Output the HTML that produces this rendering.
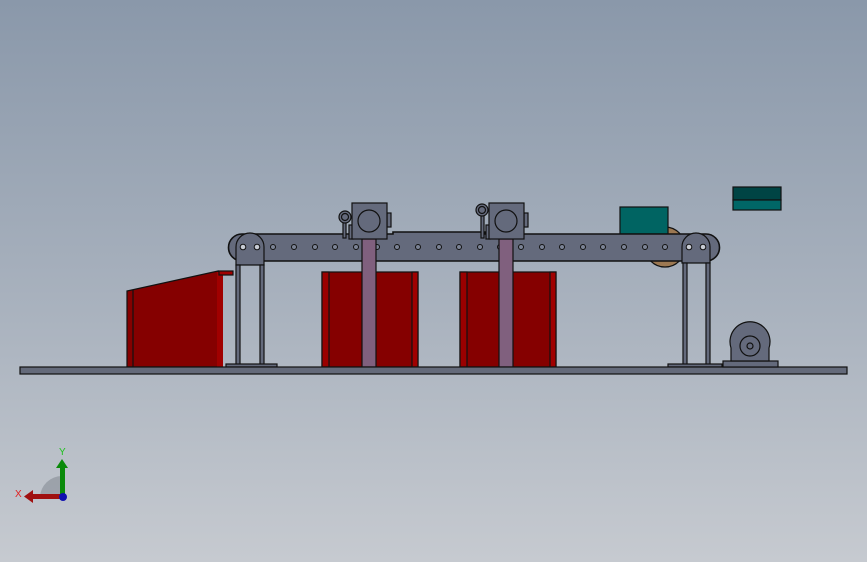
<!DOCTYPE html>
<html><head><style>html,body{margin:0;padding:0}body{width:867px;height:562px;overflow:hidden;background:linear-gradient(#8a98aa,#a9b2be 55%,#c6cad0)}</style></head><body>
<svg width="867" height="562" viewBox="0 0 867 562" xmlns="http://www.w3.org/2000/svg" style="position:absolute;left:0;top:0">
<g stroke="#111" stroke-width="1.2">
<rect x="733" y="187" width="48" height="13" fill="#004444"/>
<rect x="733" y="200" width="48" height="10" fill="#006666"/>
<circle cx="665" cy="247" r="20" fill="#9c7852"/>
<rect x="620" y="207" width="48" height="27" fill="#006462"/>
<polygon points="127,291 218,271 218,367 127,367" fill="#850000"/>
<line x1="133" y1="290" x2="133" y2="367"/>
<rect x="217" y="272" width="6" height="95" fill="#a00000" stroke="none"/>
<rect x="219" y="271" width="14" height="4" fill="#a00000"/>
<rect x="322" y="272" width="96" height="95" fill="#850000"/>
<rect x="322" y="272" width="7" height="95" fill="#9a0000"/>
<rect x="412" y="272" width="6" height="95" fill="#a00000"/>
<rect x="460" y="272" width="96" height="95" fill="#850000"/>
<rect x="460" y="272" width="7" height="95" fill="#9a0000"/>
<rect x="550" y="272" width="6" height="95" fill="#a00000"/>
<path d="M242 234 H393 V232 H485 V234 H706 A13.5 13.5 0 0 1 706 261 H242 A13.5 13.5 0 0 1 242 234 Z" fill="#646a7c" stroke-width="1.6"/>
<path d="M236 265 V247 A14 14 0 0 1 264 247 V265 Z" fill="#646a7c"/>
<path d="M682 263 V247 A14 14 0 0 1 710 247 V263 Z" fill="#646a7c"/>
<rect x="236" y="265" width="4" height="100" fill="#646a7c"/>
<rect x="260" y="265" width="4" height="100" fill="#646a7c"/>
<rect x="226" y="364" width="51" height="3" fill="#646a7c"/>
<rect x="683" y="263" width="4" height="102" fill="#646a7c"/>
<rect x="706" y="263" width="4" height="102" fill="#646a7c"/>
<rect x="668" y="364" width="54" height="3" fill="#646a7c"/>
<g fill="#7a8294" stroke-width="1">
<circle cx="243" cy="247" r="2.8" fill="#c8ccd4"/><circle cx="257" cy="247" r="2.8" fill="#c8ccd4"/>
<circle cx="273" cy="247" r="2.5"/><circle cx="294" cy="247" r="2.5"/><circle cx="315" cy="247" r="2.5"/><circle cx="335" cy="247" r="2.5"/><circle cx="356" cy="247" r="2.5"/><circle cx="377" cy="247" r="2.5"/><circle cx="397" cy="247" r="2.5"/><circle cx="418" cy="247" r="2.5"/><circle cx="439" cy="247" r="2.5"/><circle cx="459" cy="247" r="2.5"/><circle cx="480" cy="247" r="2.5"/><circle cx="500" cy="247" r="2.5"/><circle cx="521" cy="247" r="2.5"/><circle cx="542" cy="247" r="2.5"/><circle cx="562" cy="247" r="2.5"/><circle cx="583" cy="247" r="2.5"/><circle cx="603" cy="247" r="2.5"/><circle cx="624" cy="247" r="2.5"/><circle cx="645" cy="247" r="2.5"/><circle cx="665" cy="247" r="2.5"/>
<circle cx="689" cy="247" r="2.8" fill="#c8ccd4"/><circle cx="703" cy="247" r="2.8" fill="#c8ccd4"/>
</g>
<rect x="362" y="239" width="14" height="128" fill="#80607e"/>
<rect x="499" y="239" width="14" height="128" fill="#80607e"/>
<g fill="#646a7c">
<rect x="387" y="213" width="4" height="14"/>
<rect x="349" y="225" width="4" height="14"/>
<rect x="352" y="203" width="35" height="36"/>
<circle cx="369" cy="221" r="11"/>
<rect x="343" y="222" width="3" height="16"/>
<circle cx="345" cy="217" r="6"/><circle cx="345" cy="217" r="3.5"/>
<rect x="524" y="213" width="4" height="14"/>
<rect x="486" y="225" width="4" height="14"/>
<rect x="489" y="203" width="35" height="36"/>
<circle cx="506" cy="221" r="11"/>
<rect x="481" y="215" width="3" height="23"/>
<circle cx="482" cy="210" r="6"/><circle cx="482" cy="210" r="3.5"/>
</g>
<rect x="20" y="367" width="827" height="7" fill="#646a7a"/>
<rect x="723" y="361" width="55" height="6" fill="#646a7c"/>
<path d="M731 361 V348 A20 20 0 1 1 769 348 V361 Z" fill="#646a7c"/>
<circle cx="750" cy="346" r="10" fill="#646a7c"/>
<circle cx="750" cy="346" r="3" fill="#646a7c"/>
</g>
<path d="M62 497 L62 476 A22 22 0 0 0 40 497 Z" fill="#8f949c" opacity="0.7"/>
<rect x="60" y="467" width="5" height="30" fill="#0a8a0a"/>
<polygon points="56,468 62,459 68,468" fill="#0a8a0a"/>
<rect x="32" y="494" width="30" height="5" fill="#a01010"/>
<polygon points="33,490 24,496.5 33,503" fill="#a01010"/>
<circle cx="63" cy="497" r="4" fill="#1010b0"/>
<text x="59" y="455" font-family="Liberation Sans,sans-serif" font-size="10" fill="#20c020">Y</text>
<text x="15" y="497" font-family="Liberation Sans,sans-serif" font-size="10" fill="#e02020">X</text>
</svg>
</body></html>
